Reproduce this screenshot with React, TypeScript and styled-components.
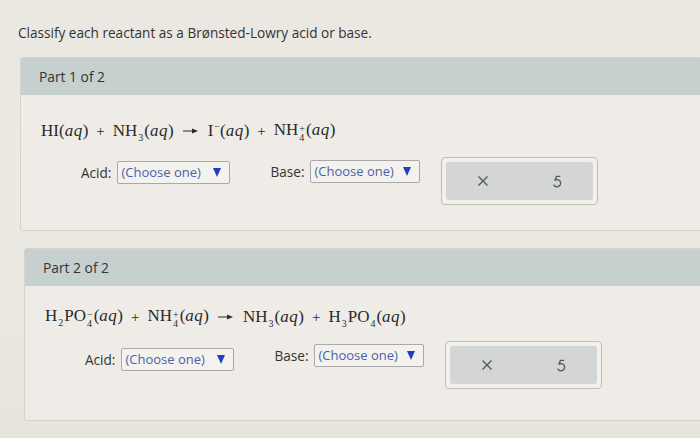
import React from "react";
import styled, { createGlobalStyle } from "styled-components";

const GlobalStyle = createGlobalStyle`
  html, body {
    margin: 0;
    padding: 0;
    background: #ebe8e2;
    overflow: hidden;
  }
  body {
    font-family: "Open Sans", "Liberation Sans", sans-serif;
    color: #2f2f2f;
  }
`;

const Page = styled.div`
  width: 700px;
  height: 438px;
  padding-top: 24px;
  box-sizing: border-box;
  background: linear-gradient(180deg, #ebe8e2 0%, #ece9e3 60%, #e7e4de 100%);
`;

const Title = styled.div`
  padding-left: 18px;
  font-size: 13.6px;
  line-height: 18px;
  color: #333;
  margin-bottom: 15px;
`;

const Card = styled.section<{ $indent: number; $gap: number }>`
  margin-left: ${(p) => p.$indent}px;
  margin-right: -30px;
  margin-bottom: ${(p) => p.$gap}px;
  border: 1px solid #d6d3cd;
  border-radius: 3px;
  background: #efece7;
  overflow: hidden;
`;

const CardHeader = styled.div`
  height: 37px;
  display: flex;
  align-items: center;
  padding-left: 18px;
  background: #c6d0cf;
  font-size: 13.8px;
  color: #333;
`;

const CardBody = styled.div<{ $height: number }>`
  height: ${(p) => p.$height}px;
  padding-left: 20px;
  box-sizing: border-box;
`;

const Equation = styled.div<{ $top: number }>`
  padding-top: ${(p) => p.$top}px;
  height: 24px;
  display: flex;
  align-items: center;
  font-family: "Liberation Serif", "DejaVu Serif", serif;
  font-size: 17px;
  color: #2a2a2a;
  white-space: nowrap;
`;

const Ital = styled.i`
  font-style: italic;
  letter-spacing: 0.5px;
`;

const Op = styled.span`
  margin: 0 8px;
  font-size: 15px;
`;

const Arrow = styled.span`
  margin: 0 9px;
  display: inline-flex;
  align-items: center;
`;

const Scripts = styled.span`
  display: inline-block;
  vertical-align: -6px;
  font-size: 10px;
  line-height: 9px;
  margin: 0 1px;
  text-align: left;
`;

const ScriptLine = styled.span`
  display: block;
`;

const Sub = styled.span`
  font-size: 10px;
  position: relative;
  top: 5px;
  margin: 0 1px;
`;

const Sup = styled.span`
  font-size: 10px;
  position: relative;
  top: -6px;
  margin-left: 1px;
`;

const Controls = styled.div<{ $top: number }>`
  margin-top: ${(p) => p.$top}px;
  padding-left: 40px;
  display: flex;
  align-items: center;
`;

const Field = styled.div<{ $gap: number; $shift: number }>`
  display: flex;
  align-items: center;
  gap: 6px;
  margin-right: ${(p) => p.$gap}px;
  transform: translateY(${(p) => p.$shift}px);
`;

const Label = styled.span`
  font-size: 13.6px;
  color: #333;
`;

const Select = styled.div<{ $width: number }>`
  width: ${(p) => p.$width}px;
  height: 23px;
  box-sizing: border-box;
  border: 1px solid #a9aaa8;
  border-radius: 2px;
  background: #f4f2ee;
  display: flex;
  align-items: center;
  justify-content: space-between;
  padding: 0 8px 0 3px;
  font-size: 13px;
  color: #4a62ad;
  white-space: nowrap;
`;

const Caret = styled.span`
  width: 0;
  height: 0;
  border-left: 4.5px solid transparent;
  border-right: 4.5px solid transparent;
  border-top: 9px solid #1f3fc2;
`;

const ActionBox = styled.div`
  width: 157px;
  height: 48px;
  box-sizing: border-box;
  padding: 4px;
  border: 1px solid #bdbdba;
  border-radius: 4px;
  background: #f2f0eb;
`;

const ActionInner = styled.div`
  height: 100%;
  border-radius: 3px;
  background: #d3d6d4;
  display: grid;
  grid-template-columns: 1fr 1fr;
  align-items: center;
  justify-items: center;
`;

const IconButton = styled.button`
  border: none;
  background: transparent;
  padding: 0;
  display: flex;
  align-items: center;
  justify-content: center;
  color: #5b5e60;
`;

const CloseIcon = () => (
  <svg width="12" height="12" viewBox="0 0 12 12">
    <path d="M1.5 1.5 L10.5 10.5 M10.5 1.5 L1.5 10.5" stroke="#55585a" strokeWidth="1.4" fill="none" />
  </svg>
);

/* circular undo arrow: short bar on top, stem down, open bowl */
const UndoIcon = () => (
  <svg width="12" height="15" viewBox="0 0 12 15">
    <path
      d="M8.6 2.4 H5.4 L4 6.2 A3.6 3.6 0 1 1 3 11.2"
      stroke="#55585a"
      strokeWidth="1.4"
      strokeLinecap="round"
      strokeLinejoin="round"
      fill="none"
    />
  </svg>
);

const ReactionArrow = () => (
  <svg width="16" height="8" viewBox="0 0 16 8">
    <path d="M0 4 H11" stroke="#2a2a2a" strokeWidth="1" />
    <path d="M9 1.5 L15 4 L9 6.5 Z" fill="#2a2a2a" />
  </svg>
);

type Species = React.ReactNode;

const Aq = () => (
  <>
    (<Ital>aq</Ital>)
  </>
);

const Eq = ({ items, top }: { items: Species[][]; top: number }) => {
  const [left, right] = items;
  const join = (list: Species[]) =>
    list.map((s, i) => (
      <React.Fragment key={i}>
        {i > 0 && <Op>+</Op>}
        {s}
      </React.Fragment>
    ));
  return (
    <Equation $top={top}>
      {join(left)}
      <Arrow>
        <ReactionArrow />
      </Arrow>
      {join(right)}
    </Equation>
  );
};

const Stack = ({ sup, sub }: { sup: string; sub: string }) => (
  <Scripts>
    <ScriptLine>{sup}</ScriptLine>
    <ScriptLine>{sub}</ScriptLine>
  </Scripts>
);

const ControlRow = ({ top, acidShift, baseShift }: { top: number; acidShift: number; baseShift: number }) => (
  <Controls $top={top}>
    <Field $gap={40} $shift={acidShift}>
      <Label>Acid:</Label>
      <Select $width={113}>
        (Choose one) <Caret />
      </Select>
    </Field>
    <Field $gap={21} $shift={baseShift}>
      <Label>Base:</Label>
      <Select $width={110}>
        (Choose one) <Caret />
      </Select>
    </Field>
    <ActionBox>
      <ActionInner>
        <IconButton aria-label="clear">
          <CloseIcon />
        </IconButton>
        <IconButton aria-label="undo">
          <UndoIcon />
        </IconButton>
      </ActionInner>
    </ActionBox>
  </Controls>
);

export default function App() {
  return (
    <>
      <GlobalStyle />
      <Page>
        <Title>Classify each reactant as a Brønsted-Lowry acid or base.</Title>

        <Card $indent={20} $gap={17}>
          <CardHeader>Part 1 of 2</CardHeader>
          <CardBody $height={135}>
            <Eq
              top={24}
              items={[
                [
                  <span key="a">
                    HI<Aq />
                  </span>,
                  <span key="b">
                    NH<Sub>3</Sub>
                    <Aq />
                  </span>,
                ],
                [
                  <span key="c">
                    I<Sup>−</Sup>
                    <Aq />
                  </span>,
                  <span key="d">
                    NH
                    <Stack sup="+" sub="4" />
                    <Aq />
                  </span>,
                ],
              ]}
            />
            <ControlRow top={14} acidShift={-9} baseShift={-10} />
          </CardBody>
        </Card>

        <Card $indent={24} $gap={0}>
          <CardHeader>Part 2 of 2</CardHeader>
          <CardBody $height={134}>
            <Eq
              top={19}
              items={[
                [
                  <span key="a">
                    H<Sub>2</Sub>PO
                    <Stack sup="−" sub="4" />
                    <Aq />
                  </span>,
                  <span key="b">
                    NH
                    <Stack sup="+" sub="4" />
                    <Aq />
                  </span>,
                ],
                [
                  <span key="c">
                    NH<Sub>3</Sub>
                    <Aq />
                  </span>,
                  <span key="d">
                    H<Sub>3</Sub>PO<Sub>4</Sub>
                    <Aq />
                  </span>,
                ],
              ]}
            />
            <ControlRow top={12} acidShift={-6} baseShift={-10} />
          </CardBody>
        </Card>
      </Page>
    </>
  );
}
